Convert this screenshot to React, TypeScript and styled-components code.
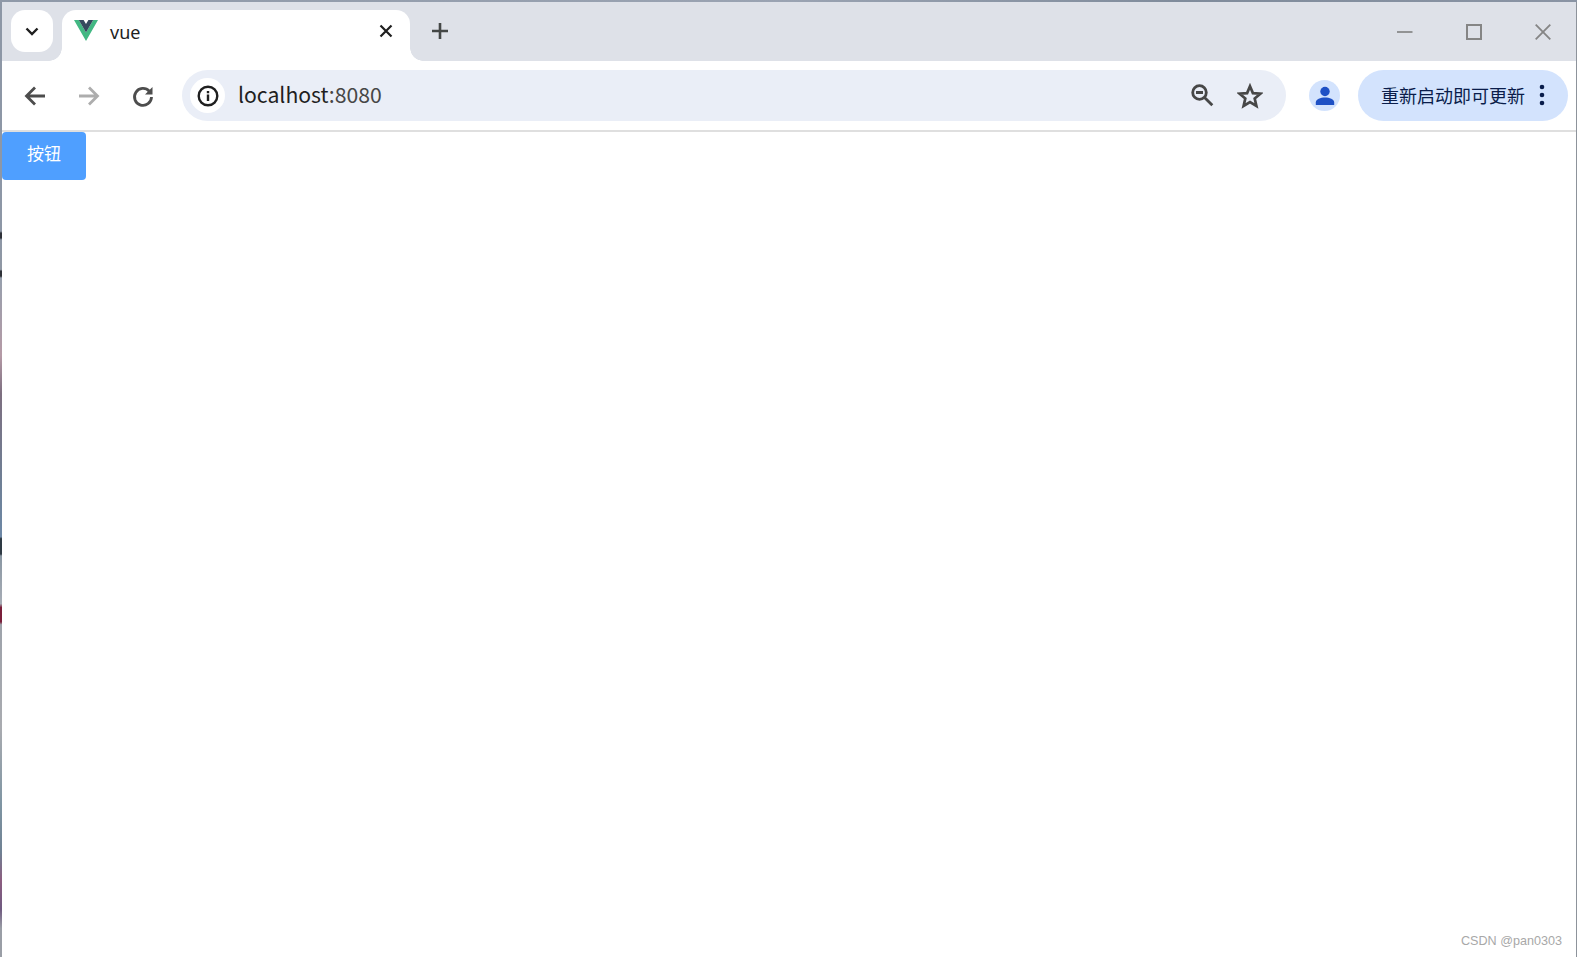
import React from "react";
import styled, { createGlobalStyle } from "styled-components";

const Global = createGlobalStyle`
  html, body { margin: 0; padding: 0; width: 100%; height: 100%; overflow: hidden; background: #fff; }
  #root { height: 100%; }
  * { box-sizing: border-box; }
`;

const CJK = `"Noto Sans CJK SC", "Noto Sans", sans-serif`;

const Screen = styled.div`
  display: flex; flex-direction: column; width: 1577px; height: 957px; position: relative;
`;
const TopEdge = styled.div`
  height: 2px; flex: none;
  background: linear-gradient(90deg, #8f99a8 0%, #9aa3b2 50%, #7f8b9b 75%, #8a94a4 100%);
`;
const Body = styled.div`
  display: flex; flex: 1; min-height: 0;
`;
const LeftEdge = styled.div`
  width: 2px; flex: none;
  background: linear-gradient(180deg,
    #8d97a6 0%, #8d97a6 24%, #2e3138 24.2%, #2e3138 24.7%, #8d97a6 24.9%, #9098a4 28%, #2e3138 28.2%, #2e3138 28.7%, #97a0ad 28.9%,
    #b59aa6 37%, #7d6f80 41%, #6f7f95 50%, #6d88a6 56%, #2e3a44 56.2%, #2e3a44 57.8%, #8a97a3 58%,
    #a7adb6 63%, #7a1f3a 63.4%, #7a1f3a 64.9%, #9ea3ab 65.2%, #a9abb0 76%, #7f95a3 84%, #6f8193 89%,
    #8c5d80 92%, #6f5a80 95%, #9a9ea6 97%, #9a9ea6 100%);
`;
const RightEdge = styled.div`
  width: 1px; flex: none; background: #8d939b;
`;
const Browser = styled.div`
  flex: 1; min-width: 0; display: flex; flex-direction: column; background: #fff;
`;
const TabStrip = styled.div`
  height: 59px; flex: none; background: #dee1e8; display: flex; align-items: flex-start;
  padding: 8px 0 0 9px;
`;
const TabSearch = styled.div`
  width: 42px; height: 42px; border-radius: 14px; background: #fff; flex: none;
  display: flex; align-items: center; justify-content: center; color: #1f1f1f;
`;
const Tab = styled.div`
  position: relative; width: 348px; height: 51px; margin-left: 9px; flex: none; background: #fff;
  border-radius: 14px 14px 0 0; display: flex; align-items: center; padding: 0 17px 10px 12px;
  &::before, &::after {
    content: ""; position: absolute; bottom: 0; width: 13px; height: 13px;
  }
  &::before { left: -13px; background: radial-gradient(circle at 0 0, transparent 12.5px, #fff 13px); }
  &::after { right: -13px; background: radial-gradient(circle at 100% 0, transparent 12.5px, #fff 13px); }
`;
const TabTitle = styled.span`
  font: 18px/24px "Noto Sans", sans-serif; color: #1f1f1f; margin-left: 12px; flex: 1; padding-top: 2px;
`;
const NewTab = styled.div`
  width: 20px; height: 20px; margin: 11px 0 0 20px; color: #444746; flex: none; display: flex;
`;
const Spacer = styled.div`
  flex: 1;
`;
const WindowControls = styled.div`
  display: flex; gap: 53px; padding: 14px 25px 0 0; color: #858585; align-items: center;
`;
const ControlIcon = styled.svg`
  width: 16px; height: 16px; display: block;
`;
const Toolbar = styled.div`
  height: 69px; flex: none; background: #fff; border-radius: 12px 12px 0 0;
  display: flex; align-items: center; padding: 0 8px 0 0;
`;
const NavButton = styled.div<{ $ml: number; $dim?: boolean }>`
  width: 26px; height: 26px; margin-left: ${(p) => p.$ml}px; flex: none; display: flex;
  color: ${(p) => (p.$dim ? "#adadad" : "#4d4d4d")};
`;
const Omnibox = styled.div`
  flex: 1; min-width: 0; height: 51px; margin-left: 26px; border-radius: 26px; background: #eaeef7;
  display: flex; align-items: center; padding: 0 23px 0 8px;
`;
const InfoChip = styled.div`
  width: 35px; height: 35px; border-radius: 50%; background: #fff; flex: none;
  display: flex; align-items: center; justify-content: center; color: #1f1f1f;
`;
const Url = styled.div`
  flex: 1; margin-left: 13px; font: 21.2px/30px ${CJK}; color: #1f1f1f; white-space: nowrap; padding-bottom: 4px;
`;
const UrlPort = styled.span`
  color: #474747;
`;
const OmniAction = styled.div<{ $ml: number }>`
  width: 26px; height: 26px; margin-left: ${(p) => p.$ml}px; flex: none; display: flex; color: #474747;
`;
const Avatar = styled.div`
  width: 31px; height: 31px; margin-left: 23px; border-radius: 50%; background: #d3e3fd; flex: none;
  display: flex; align-items: center; justify-content: center; color: #1f51c5;
`;
const UpdatePill = styled.div`
  width: 210px; height: 51px; margin-left: 18px; border-radius: 26px; background: #d3e3fd; flex: none;
  display: flex; align-items: center; padding: 0 23px 0 23px; color: #0a1d4b;
`;
const UpdateText = styled.span`
  font: 18px/26px ${CJK}; flex: 1; white-space: nowrap; padding-bottom: 1px;
`;
const MoreDots = styled.svg`
  width: 6px; height: 22px; flex: none; margin-bottom: 2px;
`;
const Divider = styled.div`
  height: 2px; flex: none; background: #dfdfdf;
`;
const Page = styled.div`
  flex: 1; min-height: 0; background: #fff;
`;
const PrimaryButton = styled.button`
  display: block; width: 84px; height: 48px; border: 0; border-radius: 4px; background: #4f9fff; color: #fff;
  font: 17px/24px ${CJK}; padding: 0 0 6px; margin: 0;
`;
const Watermark = styled.div`
  position: absolute; right: 15px; bottom: 8px; font: 12.600px/16px "Liberation Sans", sans-serif; color: #a8a8a8;
`;

const Svg = styled.svg`
  width: 100%; height: 100%; display: block;
`;

export default function App() {
  return (
    <Screen>
      <Global />
      <TopEdge />
      <Body>
        <LeftEdge />
        <Browser>
          <TabStrip>
            <TabSearch>
              <svg width="14" height="9" viewBox="0 0 14 9">
                <path d="M1.500 1.500 7 7l5.500-5.500" fill="none" stroke="currentColor" strokeWidth="2.400" />
              </svg>
            </TabSearch>
            <Tab>
              <svg width="24" height="21" viewBox="0 0 24 21">
                <path d="M0 0h4.800L12 12.500 19.200 0H24L12 21z" fill="#42b883" />
                <path d="M4.800 0h4.800L12 4l2.400-4h4.800L12 12.500z" fill="#35495e" />
              </svg>
              <TabTitle>vue</TabTitle>
              <svg width="14" height="14" viewBox="0 0 14 14">
                <path d="M1.500 1.500l11 11M12.500 1.500l-11 11" stroke="#1f1f1f" strokeWidth="2.200" fill="none" />
              </svg>
            </Tab>
            <NewTab>
              <Svg viewBox="0 0 20 20">
                <path d="M10 2v16M2 10h16" stroke="currentColor" strokeWidth="2.600" fill="none" />
              </Svg>
            </NewTab>
            <Spacer />
            <WindowControls>
              <ControlIcon viewBox="0 0 16 16">
                <path d="M0 8h15.500" stroke="currentColor" strokeWidth="1.700" fill="none" />
              </ControlIcon>
              <ControlIcon viewBox="0 0 16 16">
                <rect x="1" y="1" width="14" height="14" stroke="currentColor" strokeWidth="2" fill="none" />
              </ControlIcon>
              <ControlIcon viewBox="0 0 16 16">
                <path d="M.7.7l14.600 14.600M15.300.7.7 15.300" stroke="currentColor" strokeWidth="1.800" fill="none" />
              </ControlIcon>
            </WindowControls>
          </TabStrip>
          <Toolbar>
            <NavButton $ml={20}>
              <Svg viewBox="0 0 26 26">
                <path d="M23 13H5M13 4.500 4.500 13l8.500 8.500" stroke="currentColor" strokeWidth="2.800" fill="none" />
              </Svg>
            </NavButton>
            <NavButton $ml={28} $dim>
              <Svg viewBox="0 0 26 26">
                <path d="M3 13h18M13 4.500 21.500 13 13 21.500" stroke="currentColor" strokeWidth="2.800" fill="none" />
              </Svg>
            </NavButton>
            <NavButton $ml={28}>
              <Svg viewBox="0 0 26 26">
                <path d="M19.300 8.200A8.500 8.500 0 1 0 21.500 14" stroke="currentColor" strokeWidth="2.800" fill="none" />
                <path d="M22.500 4v7.500H15z" fill="currentColor" />
              </Svg>
            </NavButton>
            <Omnibox>
              <InfoChip>
                <svg width="22" height="22" viewBox="0 0 22 22">
                  <circle cx="11" cy="11" r="9.300" stroke="currentColor" strokeWidth="2.400" fill="none" />
                  <path d="M9.800 9.500h2.400v6.500H9.800zM9.800 6h2.400v2.300H9.800z" fill="currentColor" />
                </svg>
              </InfoChip>
              <Url>
                localhost<UrlPort>:8080</UrlPort>
              </Url>
              <OmniAction $ml={0}>
                <Svg viewBox="0 0 26 26">
                  <circle cx="9.500" cy="9.500" r="6.800" stroke="currentColor" strokeWidth="2.800" fill="none" />
                  <path d="M6 9.500h7M14.500 14.500l7.800 7.800" stroke="currentColor" strokeWidth="2.800" fill="none" />
                </Svg>
              </OmniAction>
              <OmniAction $ml={21}>
                <Svg viewBox="0 0 26 26">
                  <path
                    d="M13 3.200l2.900 6.900 7.500.6-5.700 4.900 1.700 7.300L13 19.100l-6.400 3.800 1.700-7.300-5.700-4.900 7.500-.6z"
                    stroke="currentColor"
                    strokeWidth="2.700"
                    fill="none"
                  />
                </Svg>
              </OmniAction>
            </Omnibox>
            <Avatar>
              <svg width="20" height="20" viewBox="0 0 20 20">
                <circle cx="10" cy="5.500" r="4.700" fill="currentColor" />
                <path d="M.8 19v-2.500C.8 13 5.500 11.500 10 11.500s9.200 1.500 9.200 5V19z" fill="currentColor" />
              </svg>
            </Avatar>
            <UpdatePill>
              <UpdateText>重新启动即可更新</UpdateText>
              <MoreDots viewBox="0 0 6 22">
                <circle cx="3" cy="3" r="2.300" fill="currentColor" />
                <circle cx="3" cy="11" r="2.300" fill="currentColor" />
                <circle cx="3" cy="19" r="2.300" fill="currentColor" />
              </MoreDots>
            </UpdatePill>
          </Toolbar>
          <Divider />
          <Page>
            <PrimaryButton>按钮</PrimaryButton>
          </Page>
        </Browser>
        <RightEdge />
      </Body>
      <Watermark>CSDN @pan0303</Watermark>
    </Screen>
  );
}
